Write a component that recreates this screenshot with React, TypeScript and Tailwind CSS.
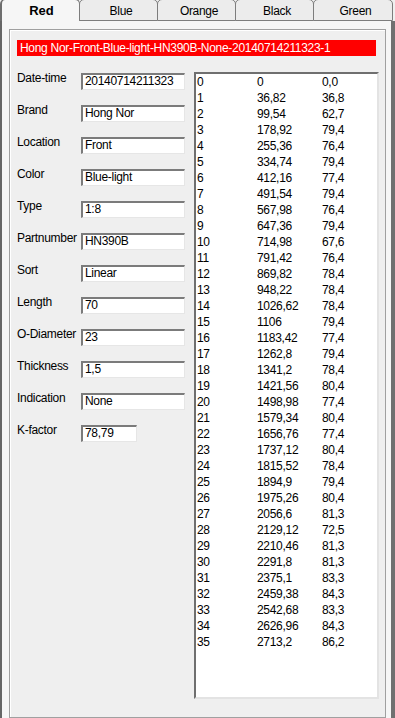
const tabs = ["Blue", "Orange", "Black", "Green"];

const fields: [string, string, boolean?][] = [
  ["Date-time", "20140714211323"],
  ["Brand", "Hong Nor"],
  ["Location", "Front"],
  ["Color", "Blue-light"],
  ["Type", "1:8"],
  ["Partnumber", "HN390B"],
  ["Sort", "Linear"],
  ["Length", "70"],
  ["O-Diameter", "23"],
  ["Thickness", "1,5"],
  ["Indication", "None"],
  ["K-factor", "78,79", true],
];

const rows: [string, string][] = [
  ["0", "0,0"], ["36,82", "36,8"], ["99,54", "62,7"], ["178,92", "79,4"],
  ["255,36", "76,4"], ["334,74", "79,4"], ["412,16", "77,4"], ["491,54", "79,4"],
  ["567,98", "76,4"], ["647,36", "79,4"], ["714,98", "67,6"], ["791,42", "76,4"],
  ["869,82", "78,4"], ["948,22", "78,4"], ["1026,62", "78,4"], ["1106", "79,4"],
  ["1183,42", "77,4"], ["1262,8", "79,4"], ["1341,2", "78,4"], ["1421,56", "80,4"],
  ["1498,98", "77,4"], ["1579,34", "80,4"], ["1656,76", "77,4"], ["1737,12", "80,4"],
  ["1815,52", "78,4"], ["1894,9", "79,4"], ["1975,26", "80,4"], ["2056,6", "81,3"],
  ["2129,12", "72,5"], ["2210,46", "81,3"], ["2291,8", "81,3"], ["2375,1", "83,3"],
  ["2459,38", "84,3"], ["2542,68", "83,3"], ["2626,96", "84,3"], ["2713,2", "86,2"],
];

function App() {
  return (
    <div className="w-[395px] h-[718px] overflow-hidden bg-[#f0f0f0] flex flex-col text-[12px] tracking-[-0.3px] text-black font-['Liberation_Sans',Arial,sans-serif]">
      {/* tab strip */}
      <div className="h-[21px] shrink-0 overflow-hidden">
        <div className="flex -mt-px">
          <div className="w-[80px] h-[23px] border-l-2 border-t border-r border-[#6e6e6e] rounded-t-[5px] bg-[#f6f6f6] text-center font-bold text-[13px] tracking-normal pt-[3px] leading-[15px] pl-[2px]">
            Red
          </div>
          {tabs.map((t, i) => (
            <div
              key={t}
              className={`-ml-px h-[22px] border border-[#7d7d7d] rounded-t-[5px] bg-[#ececec] text-center pt-[4px] leading-[15px] pl-[5px] ${i === 3 ? "w-[80px]" : "w-[79px]"}`}
            >
              {t}
            </div>
          ))}
        </div>
      </div>

      {/* tab page */}
      <div className="flex-1 bg-[#f6f6f6] border-l-2 border-l-[#666666] border-r-4 border-r-[#707070] pl-[7px] pr-[5px] pt-[8px]">
        <div className="h-full bg-[#efefef] border border-[#a0a0a0] shadow-[inset_1px_1px_0_#ffffff] pl-[7px] pt-[10px]">
          <div className="h-[16px] w-[359px] bg-[#ff0000] text-white pl-[3px] leading-[16px] whitespace-nowrap overflow-hidden">
            Hong Nor-Front-Blue-light-HN390B-None-20140714211323-1
          </div>

          <div className="mt-[16px] flex items-start">
            <div className="w-[168px] mt-px flex flex-col">
              {fields.map(([label, value, short]) => (
                <div key={label} className="h-[32px] flex items-start">
                  <div className="w-[64px] -mt-[2px] leading-[15px] whitespace-nowrap">{label}</div>
                  <div
                    className={`h-[17px] bg-white border-t-2 border-l-2 border-t-[#7b7b7b] border-l-[#7b7b7b] border-b border-r border-b-[#e6e6e6] border-r-[#e6e6e6] pl-[2px] leading-[13px] whitespace-nowrap overflow-hidden ${short ? "w-[56px]" : "w-[104px]"}`}
                  >
                    {value}
                  </div>
                </div>
              ))}
            </div>

            <div className="ml-[9px] w-[185px] h-[627px] bg-white border-t-2 border-l-2 border-t-[#6f6f6f] border-l-[#6f6f6f] border-b-2 border-r-2 border-b-[#e3e3e3] border-r-[#e3e3e3] pl-px">
              {rows.map(([a, b], i) => (
                <div key={i} className="grid grid-cols-[60px_65px_1fr] leading-[16px] whitespace-nowrap">
                  <span>{i}</span>
                  <span>{a}</span>
                  <span>{b}</span>
                </div>
              ))}
            </div>
          </div>
        </div>
      </div>
    </div>
  );
}

export default App;
